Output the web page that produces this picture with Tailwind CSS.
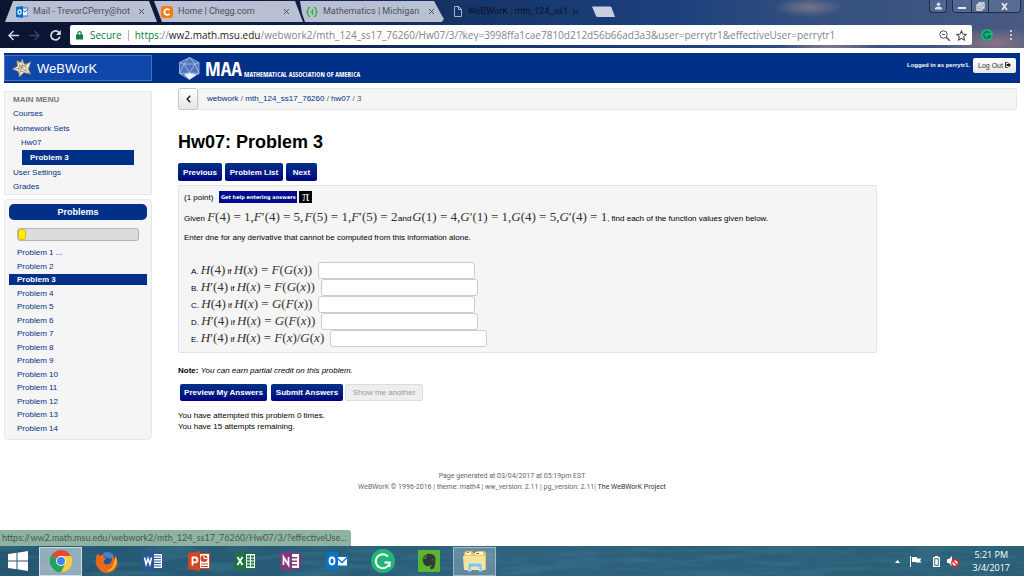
<!DOCTYPE html>
<html lang="en">
<head>
  <meta charset="UTF-8" />
  <meta name="viewport" content="width=device-width, initial-scale=1.0" />
  <title>WeBWorK : mth_124_ss17_76260 : Hw07 : 3</title>
  <script src="https://cdn.jsdelivr.net/npm/@tailwindcss/browser@4"></script>
</head>
<body class="min-h-screen flex flex-col bg-white text-black font-['Liberation_Sans',sans-serif] text-[8px] leading-[11px]">

  <!-- Browser window: tabs and address bar -->
  <div class="font-['Open_Sans',sans-serif] bg-[radial-gradient(36px_10px_at_79%_15%,#77738b_0,transparent),radial-gradient(50px_10px_at_81%_100%,#8d7b8c_0,transparent),radial-gradient(60px_16px_at_97%_90%,#8b7384_0,transparent),linear-gradient(90deg,#0b1430_0%,#0c1b42_25%,#153468_45%,#1c407c_65%,#33507f_80%,#475a83_100%)]">
    <div class="flex h-[22px] items-end text-[9px] text-[#4b505e] font-[Roboto,sans-serif]">
      <div class="ml-[5px] w-[152px] h-[21px] flex items-center pl-[11px] pr-[12px] bg-[#b9c0d3] [clip-path:polygon(0_100%,8px_0,144px_0,100%_100%)]">
        <svg class="w-3 h-3 shrink-0" viewBox="0 0 12 12"><path d="M6 2h6v8H6z" fill="#fff" stroke="#0a71c7"/><path d="M6 4l3 2 3-3" fill="none" stroke="#0a71c7"/><path d="M0 1l7-1v12l-7-1z" fill="#0a6cc4"/><ellipse cx="3.5" cy="6" rx="1.6" ry="2.1" fill="none" stroke="#fff" stroke-width="1.2"/></svg>
        <a href="#" class="ml-[5px] flex-1 whitespace-nowrap">Mail - TrevorCPerry@hot</a>
        <button aria-label="Close tab"><svg class="w-[7px] h-[7px]" viewBox="0 0 7 7"><path d="M1 1l5 5M6 1L1 6" stroke="#4b505e"/></svg></button>
      </div>
      <div class="-ml-[3px] w-[149px] h-[21px] flex items-center pl-[7px] pr-[13px] bg-[#b9c0d3] [clip-path:polygon(0_0,141px_0,100%_100%,8px_100%)]">
        <svg class="w-3 h-3 shrink-0" viewBox="0 0 12 12"><rect width="12" height="12" rx="3" fill="#f57c0a"/><path d="M8.5 4.2A2.9 2.9 0 1 0 8.500 7.800" fill="none" stroke="#fff" stroke-width="1.9"/></svg>
        <a href="#" class="ml-[5px] flex-1 whitespace-nowrap">Home | Chegg.com</a>
        <button aria-label="Close tab"><svg class="w-[7px] h-[7px]" viewBox="0 0 7 7"><path d="M1 1l5 5M6 1L1 6" stroke="#4b505e"/></svg></button>
      </div>
      <div class="-ml-[3px] w-[144px] h-[21px] flex items-center pl-[6px] pr-[9px] bg-[#b9c0d3] [clip-path:polygon(0_0,134px_0,142px_70%,100%_85%,142px_100%,5px_100%,2px_60%)]">
        <svg class="w-3 h-3 shrink-0" viewBox="0 0 12 12"><path d="M4 1.500Q2 1.500 2 3v1.500L.8 6 2 7.500V9q0 1.500 2 1.500M8 1.500q2 0 2 1.500v1.500L11.200 6 10 7.500V9q0 1.500-2 1.500" fill="none" stroke="#2eb52e" stroke-width="1.300"/><path d="M6.500 3v6M4 6h3" stroke="#2eb52e" stroke-width="1.200"/></svg>
        <a href="#" class="ml-[5px] flex-1 whitespace-nowrap">Mathematics | Michigan</a>
        <button aria-label="Close tab"><svg class="w-[7px] h-[7px]" viewBox="0 0 7 7"><path d="M1 1l5 5M6 1L1 6" stroke="#4b505e"/></svg></button>
      </div>
      <div class="w-[150px] h-[21px] flex items-center pl-[10px] pr-[15px] text-[#0a1226]">
        <svg class="w-2 h-[11px] shrink-0" viewBox="0 0 8 11"><path d="M.5.5h4l3 3v7h-7zM4.500.5v3h3" fill="none" stroke="#a9b3cc"/></svg>
        <a href="#" class="ml-[6px] flex-1 whitespace-nowrap">WeBWorK : mth_124_ss1</a>
        <button aria-label="Close tab"><svg class="w-[7px] h-[7px]" viewBox="0 0 7 7"><path d="M1 1l5 5M6 1L1 6" stroke="#0a1226"/></svg></button>
      </div>
      <button aria-label="New tab" class="self-start mt-[6px] -ml-[4px]"><svg class="w-[26px] h-[11px]" viewBox="0 0 26 11"><path d="M2 .5h18q1 0 1.500 1l3.500 9.500H8q-1.500 0-2-1z" fill="#c8cfe0"/></svg></button>
      <div class="ml-auto self-start flex mr-[3px] gap-[5px]">
        <button aria-label="Profile" class="w-[18px] h-[13px] grid place-items-center border border-t-0 border-[#1a2c50] rounded-b bg-white/10"><svg class="w-[7px] h-[8px]" viewBox="0 0 7 8"><circle cx="3.500" cy="2.300" r="1.700" fill="#dde2ee"/><path d="M0 7.500V6q1-1.500 3.500-1.500T7 6v1.500z" fill="#dde2ee"/></svg></button>
        <div class="flex border border-t-0 border-[#1a2c50] rounded-b bg-white/10 h-[13px]">
          <button aria-label="Minimize" class="w-[19px] grid place-items-center border-r border-[#1a2c50]"><svg class="w-2 h-2" viewBox="0 0 8 8"><path d="M0 5h8v2H0z" fill="#e6e9f1"/></svg></button>
          <button aria-label="Restore" class="w-[17px] grid place-items-center border-r border-[#1a2c50]"><svg class="w-[9px] h-[9px]" viewBox="0 0 9 9"><path d="M3 2.500V1h5v5H6.500M1 3h5v5H1zM3 5h1v1H3z" fill="none" stroke="#e6e9f1" stroke-width="1.300"/></svg></button>
          <button aria-label="Close" class="w-[31px] grid place-items-center"><svg class="w-[7px] h-[7px]" viewBox="0 0 7 7"><path d="M1 0l5 7M6 0L1 7" stroke="#e6e9f1" stroke-width="1.700"/></svg></button>
        </div>
      </div>
    </div>
    <div class="flex h-[26px] items-center pl-2 pr-1">
      <button aria-label="Back"><svg class="w-[11px] h-[11px]" viewBox="0 0 11 11"><path d="M11 5.500H1.500M5.500 1L1 5.500 5.500 10" fill="none" stroke="#d5d9e4" stroke-width="1.500"/></svg></button>
      <button aria-label="Forward" class="ml-[10px]"><svg class="w-[11px] h-[11px]" viewBox="0 0 11 11"><path d="M0 5.500h9.500M5.500 1L10 5.500 5.500 10" fill="none" stroke="#38445f" stroke-width="1.500"/></svg></button>
      <button aria-label="Reload" class="ml-[10px]"><svg class="w-[11px] h-[11px]" viewBox="0 0 11 11"><path d="M9.300 3A4.500 4.500 0 1 0 9.800 6.800" fill="none" stroke="#d5d9e4" stroke-width="1.700"/><path d="M10.800 0v5H6z" fill="#d5d9e4"/></svg></button>
      <div class="ml-[9px] flex-1 flex items-center h-5 px-[6px] bg-white rounded-[2px] text-[10px] text-[#80848c]">
        <svg class="w-[7px] h-[9px]" viewBox="0 0 7 9"><path d="M1.800 4V2.300a1.700 1.700 0 0 1 3.400 0V4" fill="none" stroke="#0b8043" stroke-width="1.200"/><rect y="3.500" width="7" height="5" fill="#0b8043"/></svg>
        <span class="ml-[7px] text-[#0b8043]">Secure</span>
        <span class="mx-[6px] w-px h-[11px] bg-[#b5b5b5]"></span>
        <span class="text-[#0b8043]">https</span>://<span class="text-[#222]">ww2.math.msu.edu</span>
        <input aria-label="Address" class="flex-1 min-w-0 outline-none" value="/webwork2/mth_124_ss17_76260/Hw07/3/?key=3998ffa1cae7810d212d56b66ad3a3&amp;user=perrytr1&amp;effectiveUser=perrytr1" />
        <button aria-label="Zoom"><svg class="w-[11px] h-[11px]" viewBox="0 0 11 11"><circle cx="4.500" cy="4.500" r="3.700" fill="none" stroke="#555"/><path d="M7 7l4 4" stroke="#555" stroke-width="1.400"/><path d="M3 4.500h3" stroke="#555"/></svg></button>
        <button aria-label="Bookmark this page" class="ml-[6px] -mr-[1px]"><svg class="w-[11px] h-[11px]" viewBox="0 0 12 12"><path d="M6 1l1.500 3.500 3.800.3-2.900 2.500.9 3.700L6 9l-3.300 2 .9-3.700L.7 4.800l3.800-.3z" fill="none" stroke="#444" stroke-width="1.100"/></svg></button>
      </div>
      <button aria-label="Grammarly" class="ml-[9px]"><svg class="w-3 h-3" viewBox="0 0 12 12"><circle cx="6" cy="6" r="6" fill="#15b578"/><path d="M8.500 4A3.200 3.200 0 1 0 9 7H6.500M9 6.300v2.700" fill="none" stroke="#0a6b5a" stroke-width="1.400"/></svg></button>
      <button aria-label="Menu" class="ml-[14px] mr-[5px]"><svg class="w-[8px] h-[11px]" viewBox="0 0 8 11"><path d="M3 0h2v2H3zM3 4h2v2H3zM3 8h2v2H3z" fill="#c6cad6"/></svg></button>
    </div>
  </div>

  <!-- WeBWorK page -->
  <div class="relative flex-1 px-1 pt-[5px] bg-white">
    <header class="flex items-center h-[30px] bg-[#003087] text-white">
      <a href="#" class="w-[148px] h-[26px] flex items-center pl-[6px] bg-[#1047ab] border border-[#4a70b8] text-[13px]">
        <svg class="w-[22px] h-[18px] mr-[4px]" viewBox="0 0 22 20"><path d="M11 0l3 6 7-3-3 8 3 6-8-2-5 5-1-6-7-3 6-3-1-6 5 2z" fill="#f3ecc4" stroke="#7d7657" stroke-width=".6"/><path d="M10.500 10L13 1M10.500 10l9-6M10.500 10l9 6M10.500 10L8 18M10.500 10L1 11M10.500 10L6 3M12 7l4 2-1 4-5 1-3-2 1-4z" fill="none" stroke="#6e6850" stroke-width=".6"/></svg>
        WeBWorK
      </a>
      <a href="#" class="ml-[26px] flex items-end">
        <svg class="w-[23px] h-[23px]" viewBox="0 0 23 23"><path d="M11.500.5l9.500 5v11l-9.500 6-10-6v-11z" fill="#4d74bd" stroke="#c3d0ea" stroke-width=".7"/><path d="M11.500.5L6 7l11 0zM6 7l5.500 9L17 7M1.500 5.500L6 7l-4.500 9.500 10-.5 9.500.5L17 7l4-1.500M11.500 16v6.500" fill="none" stroke="#c3d0ea" stroke-width=".7"/><path d="M6 17.500l5.500-1.500 7 1.500-7 5z" fill="#e9eef8"/></svg>
        <span class="ml-[4px] text-[20px] leading-[22px] font-bold font-['Liberation_Sans_Narrow','Open_Sans_Condensed','DejaVu_Sans_Condensed',sans-serif]">MAA</span>
        <span class="ml-[2px] text-[7px] leading-[11px] font-bold font-['Liberation_Sans_Narrow','Open_Sans_Condensed','Liberation_Sans',sans-serif]">MATHEMATICAL ASSOCIATION OF AMERICA</span>
      </a>
      <div class="ml-auto mr-1 mb-[6px] flex items-center text-[7px] gap-[3px]">
        <span class="font-bold text-[6px]">Logged in as perrytr1.</span>
        <button class="h-[15px] w-[43px] flex items-center justify-center gap-[2px] rounded-[2px] bg-linear-to-b from-white to-[#e6e6e6] text-[#333]">Log Out <svg class="w-[6px] h-[6px]" viewBox="0 0 6 6"><path d="M2.500.5H.5v5h2" fill="none" stroke="#333"/><path d="M1.500 2h2V.5L6 3 3.500 5.500V4h-2z" fill="#222"/></svg></button>
      </div>
    </header>

    <div class="flex items-start gap-[26px] mt-[5px]">
      <aside class="w-[148px] mt-[3px] text-[#003087]">
        <nav aria-label="Main menu" class="border border-[#e8e8e8] bg-[#f5f5f5] px-2 pt-[2px]">
          <h2 class="font-bold text-[#777]">MAIN MENU</h2>
          <ul class="flex flex-col min-h-[88px] mt-px *:flex-1 *:flex *:items-center">
            <li><a href="#">Courses</a></li>
            <li><a href="#">Homework Sets</a></li>
            <li class="pl-2"><a href="#">Hw07</a></li>
            <li class="ml-[9px] mr-[9px] pl-2 bg-[#003087] text-white font-bold"><a href="#">Problem 3</a></li>
            <li><a href="#">User Settings</a></li>
            <li><a href="#">Grades</a></li>
          </ul>
        </nav>
        <nav aria-label="Problems" class="mt-1 border border-[#e8e8e8] bg-[#f5f5f5] rounded-[4px] px-1 pt-1 pb-[4px]">
          <h2 class="h-4 rounded-[5px] bg-[#003087] text-white font-bold text-center text-[9px] leading-4">Problems</h2>
          <div role="progressbar" aria-label="Problems completed" aria-valuenow="7" class="mx-2 mt-2 h-[13px] rounded-[3px] border border-[#b5b5b5] bg-[#dcdcdc]"><div class="h-full rounded-[3px] border border-[#e0b800] bg-[#ffee00]" style="width:7%"></div></div>
          <ul class="flex flex-col min-h-[189px] mt-[5px] *:flex-1 *:flex *:items-center *:px-2">
            <li><a href="#">Problem 1 ...</a></li>
            <li><a href="#">Problem 2</a></li>
            <li><a href="#" class="flex-1 -mx-2 px-2 bg-[#003087] text-white font-bold">Problem 3</a></li>
            <li><a href="#">Problem 4</a></li>
            <li><a href="#">Problem 5</a></li>
            <li><a href="#">Problem 6</a></li>
            <li><a href="#">Problem 7</a></li>
            <li><a href="#">Problem 8</a></li>
            <li><a href="#">Problem 9</a></li>
            <li><a href="#">Problem 10</a></li>
            <li><a href="#">Problem 11</a></li>
            <li><a href="#">Problem 12</a></li>
            <li><a href="#">Problem 13</a></li>
            <li><a href="#">Problem 14</a></li>
          </ul>
        </nav>
      </aside>

      <main class="flex-1 pr-[3px]">
        <div class="flex">
          <button aria-label="Back" class="w-5 h-[22px] grid place-items-center rounded-[2px] border border-[#c8c8c8] bg-linear-to-b from-white to-[#e6e6e6]"><svg class="w-[5px] h-[8px]" viewBox="0 0 5 8"><path d="M4.200.8L1.200 4l3 3.200" fill="none" stroke="#222" stroke-width="1.500"/></svg></button>
          <nav aria-label="Breadcrumb" class="flex-1 pl-2 leading-[20px] border border-[#e8e8e8] bg-[#f5f5f5] rounded-[2px] whitespace-pre text-[#555]"><a href="#" class="text-[#003087]">webwork</a> / <a href="#" class="text-[#003087]">mth_124_ss17_76260</a> / <a href="#" class="text-[#003087]">hw07</a> / 3</nav>
        </div>

        <h1 class="mt-[20px] text-[18px] leading-[24px] font-bold">Hw07: Problem 3</h1>

        <div class="mt-[9px] flex gap-[3px] *:h-[18px] *:rounded-[2px] *:bg-linear-to-b *:from-[#003087] *:to-[#000080] *:text-white *:font-bold">
          <button class="w-[44px]">Previous</button>
          <button class="w-[58px]">Problem List</button>
          <button class="w-[31px]">Next</button>
        </div>

        <section class="mt-1 w-5/6 border border-[#e3e3e3] rounded-[2px] bg-[#f5f5f5] px-[5px] pt-[5px] pb-[5px]">
          <div class="flex items-center h-3">
            <span>(1 point)</span>
            <button class="ml-[6px] w-[78px] h-3 bg-[#000c8c] text-white font-bold text-[5px] font-['DejaVu_Sans',sans-serif] whitespace-nowrap">Get help entering answers</button>
            <span class="ml-[2px] w-[13px] h-3 bg-black text-white text-[14px] leading-[11px] text-center font-['Liberation_Serif',serif]">π</span>
          </div>
          <p class="mt-[6px] h-4 leading-4 whitespace-nowrap [&_span]:font-['Liberation_Serif',serif] [&_span]:text-[13px] [&_span]:text-[#333]">Given <span><i>F</i>(4) = 1,<i>F</i>′(4) = 5,&hairsp;<i>F</i>(5) = 1,<i>F</i>′(5) = 2</span>&hairsp;and&hairsp;<span><i>G</i>(1) = 4,<i>G</i>′(1) = 1,<i>G</i>(4) = 5,<i>G</i>′(4) = 1</span>, find each of the function values given below.</p>
          <p class="mt-[7px]">Enter dne for any derivative that cannot be computed from this information alone.</p>

          <ol class="mt-[19px] ml-[7px] *:flex *:items-center *:h-[17px] *:whitespace-pre [&_span]:font-['Liberation_Serif',serif] [&_span]:text-[13px] [&_span]:text-[#333] [&_input]:ml-[6px] [&_input]:w-[157px] [&_input]:h-[17px] [&_input]:px-1 [&_input]:bg-white [&_input]:border [&_input]:border-[#ccc] [&_input]:rounded-[3px]">
            <li><label for="a1">A. <span><i>H</i>(4)</span> if <span><i>H</i>(<i>x</i>) = <i>F</i>(<i>G</i>(<i>x</i>))</span></label><input id="a1" type="text" /></li>
            <li><label for="a2">B. <span><i>H</i>′(4)</span> if <span><i>H</i>(<i>x</i>) = <i>F</i>(<i>G</i>(<i>x</i>))</span></label><input id="a2" type="text" /></li>
            <li><label for="a3">C. <span><i>H</i>(4)</span> if <span><i>H</i>(<i>x</i>) = <i>G</i>(<i>F</i>(<i>x</i>))</span></label><input id="a3" type="text" /></li>
            <li><label for="a4">D. <span><i>H</i>′(4)</span> if <span><i>H</i>(<i>x</i>) = <i>G</i>(<i>F</i>(<i>x</i>))</span></label><input id="a4" type="text" /></li>
            <li><label for="a5">E. <span><i>H</i>′(4)</span> if <span><i>H</i>(<i>x</i>) = <i>F</i>(<i>x</i>)/<i>G</i>(<i>x</i>)</span></label><input id="a5" type="text" /></li>
          </ol>
        </section>

        <p class="mt-[12px]"><b>Note:</b> <i>You can earn partial credit on this problem.</i></p>
        <div class="mt-[8px] ml-[2px] flex gap-1 *:h-[17px] *:rounded-[2px]">
          <button class="w-[87px] bg-linear-to-b from-[#003087] to-[#000080] text-white font-bold">Preview My Answers</button>
          <button class="w-[72px] bg-linear-to-b from-[#003087] to-[#000080] text-white font-bold">Submit Answers</button>
          <button disabled class="w-[78px] -ml-[2px] border border-[#ddd] bg-[#eee] text-[#999]">Show me another</button>
        </div>
        <p class="mt-[9px]">You have attempted this problem 0 times.<br />You have 15 attempts remaining.</p>
      </main>
    </div>

    <footer class="mt-[31px] text-center text-[7px] text-[#666] font-[Roboto,sans-serif]">
      <p>Page generated at 03/04/2017 at 05:19pm EST</p>
      <p>WeBWorK © 1996-2016 | theme: math4 | ww_version: 2.11 | pg_version: 2.11| <a href="#" class="text-[#333]">The WeBWorK Project</a></p>
    </footer>

    <div class="absolute left-0 bottom-0 h-4 pl-[2px] pr-1 rounded-tr-[3px] bg-[#8fb3a2] text-[#46584f] text-[9px] leading-4 font-[Lato,sans-serif] whitespace-nowrap">https://ww2.math.msu.edu/webwork2/mth_124_ss17_76260/Hw07/3/?effectiveUse...</div>
  </div>

  <!-- Windows taskbar -->
  <div class="relative flex h-[30px] items-center bg-linear-to-r from-[#24566f] via-[#2d617c] to-[#2a5f76] text-white font-['Open_Sans',sans-serif]">
    <svg class="absolute inset-0 w-full h-full opacity-40" aria-hidden="true"><filter id="water"><feTurbulence type="fractalNoise" baseFrequency=".02 .16" numOctaves="3" seed="4"/><feColorMatrix values="0 0 0 0 .05  0 0 0 0 .2  0 0 0 0 .3  3 0 0 0 -1.200"/></filter><rect width="100%" height="100%" filter="url(#water)"/></svg>
    <div class="relative flex flex-1 gap-[3px] *:w-[43px] *:h-[29px] *:grid *:place-items-center">
      <button aria-label="Start" class="max-w-[36px]"><svg class="w-5 h-5" viewBox="0 0 20 20"><path d="M0 3l8.500-1.200v7.700H0zM9.500 1.700L20 0v9.500H9.500zM0 10.500h8.500v7.700L0 17zM9.500 10.500H20V20L9.500 18.300z" fill="#fff"/></svg></button>
      <button aria-label="Chrome" class="bg-white/50 border border-white/60"><svg class="w-[22px] h-[22px]" viewBox="0 0 22 22"><path d="M11 11L1.470 5.500A11 11 0 0 1 20.530 5.500z" fill="#df4a38"/><path d="M11 11l9.530-5.500A11 11 0 0 1 11 22z" fill="#fbcd3c"/><path d="M11 11v11A11 11 0 0 1 1.470 5.500z" fill="#23a45a"/><path d="M11 6h9.800A11 11 0 0 1 11 22l4.300-8.500z" fill="#fbcd3c"/><path d="M6.700 13.500L1.470 5.500A11 11 0 0 0 11 22l4.300-8.500z" fill="#23a45a"/><circle cx="11" cy="11" r="5" fill="#fff"/><circle cx="11" cy="11" r="4" fill="#4285f4"/></svg></button>
      <button aria-label="Firefox"><svg class="w-[23px] h-[23px]" viewBox="0 0 23 23"><circle cx="11.500" cy="11.500" r="10.500" fill="#26539c"/><path d="M8 3q6-3 11 2l-3 4-6-2z" fill="#3e84c8"/><path d="M2.500 3.500L5 6q2-2 5-1.500L8.500 7q1 1 3 1l-2.500 2.500q-1 3 2 4 3 .5 5-2 2-4-.5-7.500 4 2 4.500 5l.5-4q3 5 1.500 10-3 7-10 7T1 14.500Q0 8 2.500 3.500z" fill="#e66b1c"/><path d="M20.500 6q2.500 6-1 11-3 4.500-8.500 4.500 6-2.500 7.500-6T20.500 6z" fill="#fbc52c"/></svg></button>
      <button aria-label="Word"><svg class="w-[21px] h-[20px]" viewBox="0 0 21 20"><path d="M11 2.500h9.500v15H11z" fill="#fff" stroke="#2a5699"/><path d="M12 5h7M12 7.500h7M12 10h7M12 12.500h7M12 15h7" stroke="#2a5699"/><path d="M0 2l12-2v20L0 18z" fill="#2a5699"/><path d="M2.500 6.500l1.600 7L6 7.500l1.900 6 1.600-7" fill="none" stroke="#fff" stroke-width="1.500"/></svg></button>
      <button aria-label="PowerPoint"><svg class="w-[22px] h-[20px]" viewBox="0 0 22 20"><path d="M11 2.500h10.500v15H11z" fill="#fff" stroke="#d24625"/><circle cx="16" cy="7.500" r="3.500" fill="#d24625"/><path d="M16 7.500V4M16 7.500h3.500" stroke="#fff"/><path d="M13 13h7M13 15.500h7" stroke="#d24625" stroke-width="1.200"/><path d="M0 2l12-2v20L0 18z" fill="#d24625"/><path d="M4.500 14.500v-8H7a2.300 2.300 0 0 1 0 4.800H4.500" fill="none" stroke="#fff" stroke-width="1.800"/></svg></button>
      <button aria-label="Excel"><svg class="w-[22px] h-[20px]" viewBox="0 0 22 20"><path d="M11 2.500h10.500v15H11z" fill="#fff" stroke="#207245"/><path d="M13 5.500h7M13 8.500h7M13 11.500h7M13 14.500h7" stroke="#207245" stroke-width="2"/><path d="M16.500 3v14" stroke="#fff"/><path d="M0 2l12-2v20L0 18z" fill="#207245"/><path d="M3.500 6l5 8M8.500 6l-5 8" stroke="#fff" stroke-width="1.800"/></svg></button>
      <button aria-label="OneNote"><svg class="w-[22px] h-[20px]" viewBox="0 0 22 20"><path d="M11 2.500h8.500v15H11z" fill="#fff" stroke="#80397b"/><path d="M19 3h2.500v3.500H19zM19 8h2.500v3.500H19zM19 13h2.500v3.500H19zM12 6h5v1.500h-5zM12 9.500h5V11h-5zM12 13h5v1.500h-5z" fill="#80397b"/><path d="M0 2l12-2v20L0 18z" fill="#80397b"/><path d="M3.500 14V6l5 8V6" fill="none" stroke="#fff" stroke-width="1.700"/></svg></button>
      <button aria-label="Outlook"><svg class="w-[22px] h-[20px]" viewBox="0 0 22 20"><path d="M11 5.500h10.500v9.500H11z" fill="#fff" stroke="#0a72c6"/><path d="M12 8l4 3.500L21.500 6" fill="none" stroke="#0a72c6" stroke-width="1.300"/><path d="M0 2l12-2v20L0 18z" fill="#0a72c6"/><ellipse cx="6" cy="10" rx="2.500" ry="3.500" fill="none" stroke="#fff" stroke-width="1.800"/></svg></button>
      <button aria-label="Grammarly"><svg class="w-6 h-6" viewBox="0 0 24 24"><circle cx="12" cy="12" r="12" fill="#1fb678"/><path d="M17 7.500A7 7 0 1 0 18.700 13.500H13.500M18.500 13v5" fill="none" stroke="#fff" stroke-width="2"/></svg></button>
      <button aria-label="Evernote"><svg class="w-[22px] h-[22px]" viewBox="0 0 22 22"><rect width="22" height="22" rx="1" fill="#5cb531"/><path d="M8.500 4q4-1 7 1 2 1 2 5t-1.500 8q-1 1.500-3.500 1-1-2 .5-3h1q0-1-1.500-1-1 2-4 1Q5 15 4.500 8.500H8z" fill="#30383a"/><path d="M7.500 4.500v3H4.500z" fill="#30383a"/><path d="M14 10q1-1.500 2 .5z" fill="#5cb531"/></svg></button>
      <button aria-label="File Explorer" class="bg-white/25 border border-white/40"><svg class="w-[24px] h-[22px]" viewBox="0 0 24 22"><path d="M1 3l2-2h6l1 2h3l1-2h7l2 2v17H1z" fill="#e9c55c"/><path d="M3 2h5v3H3zM12 2h8v3h-8z" fill="#f8f4e2"/><path d="M4 2h2v1H4z" fill="#3b9b49"/><path d="M13 3h3v1h-3z" fill="#c8452f"/><path d="M0 6h22v14H1z" fill="#f7e39a"/><path d="M5 21v-6q0-2 2-2h10q2 0 2 2v6h-3v-4H8v4z" fill="#86c5ea" stroke="#d7effb" stroke-width=".7"/></svg></button>
    </div>
    <div class="relative flex items-center pr-[14px]">
      <svg class="w-[5px] h-[3px]" viewBox="0 0 5 3"><path d="M0 3l2.500-3L5 3z" fill="#fff"/></svg>
      <svg class="ml-[10px] w-3 h-[11px]" viewBox="0 0 12 11"><path d="M.5 0v11" stroke="#fff"/><path d="M2 1h5v1.500h4.500L10 4.500l1.500 2H6V6H2z" fill="#fff"/></svg>
      <svg class="ml-[11px] w-[7px] h-[11px]" viewBox="0 0 7 11"><path d="M2 0h3v1H2z" fill="#fff"/><path d="M.7 1.700h5.600v8.600H.7z" fill="#24566f" stroke="#fff" stroke-width="1.300"/><path d="M2.200 3.200h2.600v5.600H2.200z" fill="#fff"/></svg>
      <svg class="ml-[7px] w-3 h-[11px]" viewBox="0 0 12 11"><path d="M0 3h2l3-3v10L2 7H0z" fill="#fff"/><circle cx="8" cy="7" r="3.200" fill="#fff" stroke="#e0262b" stroke-width="1.400"/><path d="M6 5l4 4" stroke="#e0262b" stroke-width="1.400"/></svg>
      <div class="ml-[14px] text-center text-[9px] leading-[13px]">5:21 PM<br />3/4/2017</div>
    </div>
  </div>
</body>
</html>
